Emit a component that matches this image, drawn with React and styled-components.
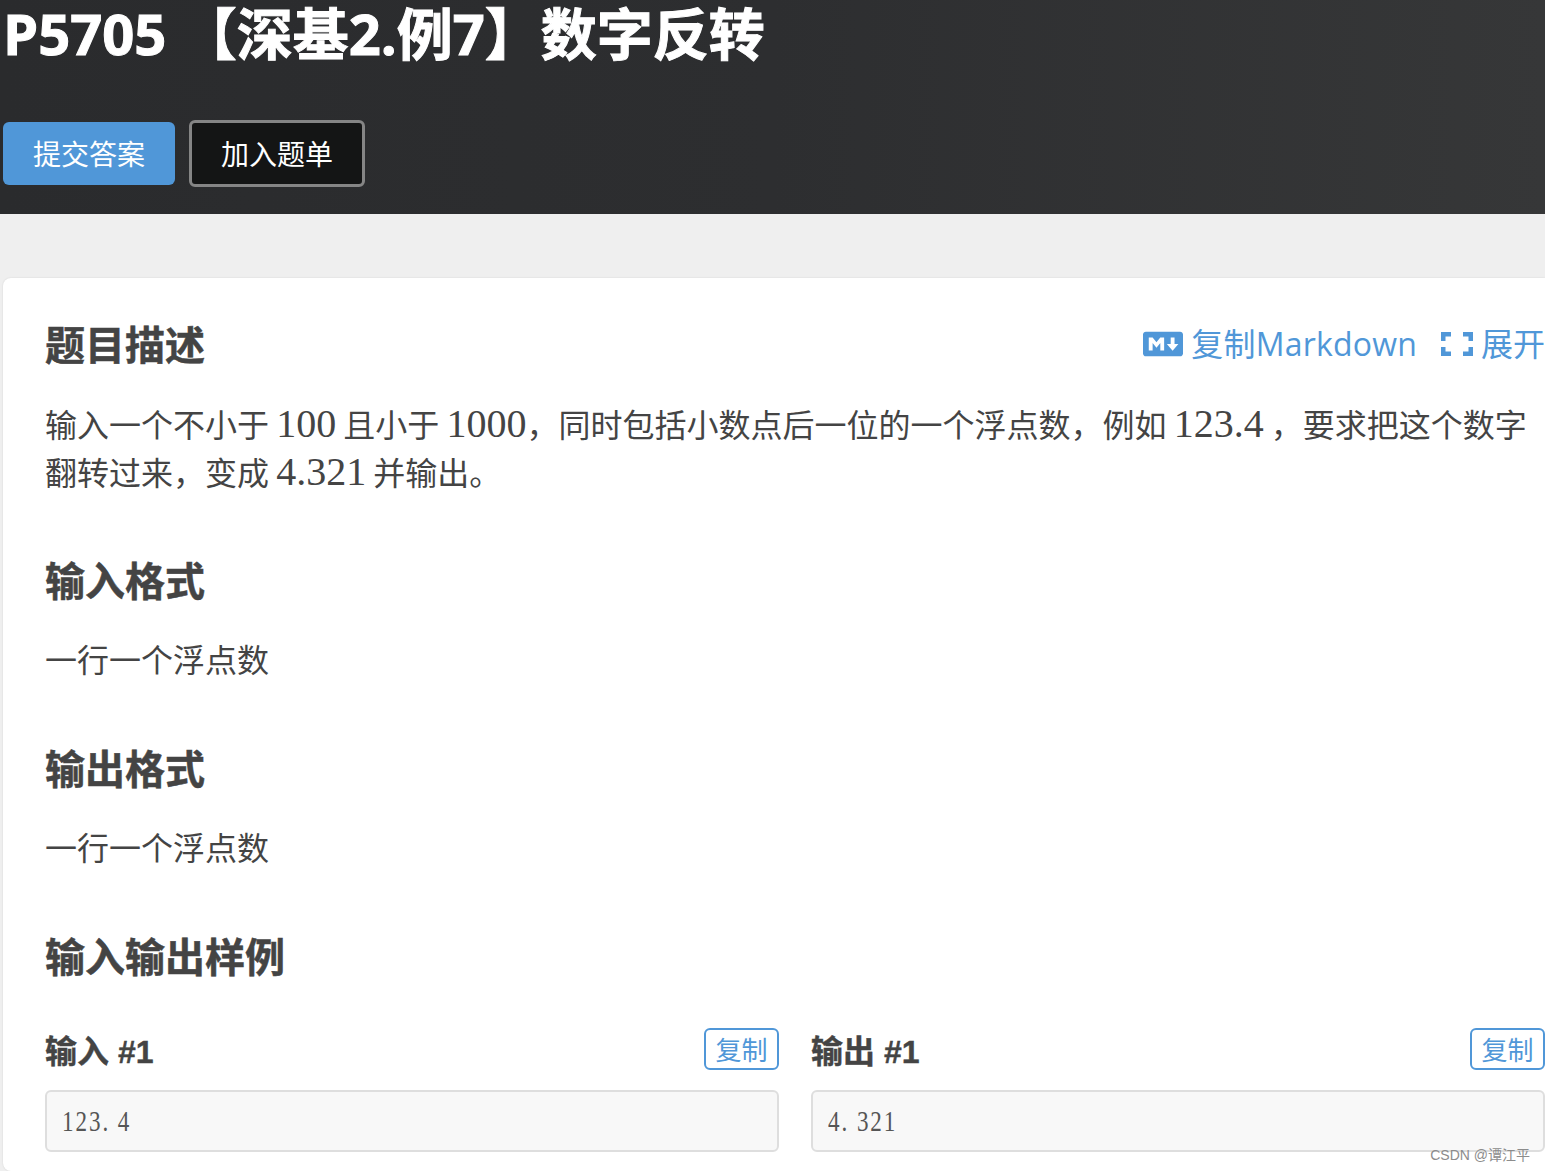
import React from "react";
import styled, { createGlobalStyle } from "styled-components";
import { FaMarkdown } from "react-icons/fa";

const GlobalStyle = createGlobalStyle`
  html, body {
    margin: 0;
    padding: 0;
    background: #efefef;
  }
  body {
    font-family: "Open Sans", "Noto Sans CJK SC", sans-serif;
    color: #444;
  }
`;

const Page = styled.div`
  position: relative;
  width: 1545px;
  height: 1171px;
  overflow: hidden;
  background: #efefef;
`;

const Header = styled.header`
  height: 214px;
  box-sizing: border-box;
  padding: 0 0 0 3px;
  background: linear-gradient(90deg, #2a2b2d 0%, #2d2e30 50%, #363738 100%);
`;

const Title = styled.h1`
  margin: 0 0 50px;
  height: 70px;
  font-size: 56px;
  line-height: 67px;
  font-weight: 700;
  color: #fff;
  white-space: nowrap;
  -webkit-text-stroke: 1px #fff;
`;

const Actions = styled.div`
  display: flex;
  align-items: center;
  gap: 14px;
`;

const SubmitButton = styled.button`
  width: 172px;
  height: 63px;
  padding: 0 0 2px;
  border: 0;
  border-radius: 6px;
  background: #5097d8;
  color: #fff;
  font: 400 28px "Noto Sans CJK SC", sans-serif;
`;

const ListButton = styled.button`
  width: 176px;
  height: 67px;
  padding: 0 0 2px;
  border: 3px solid #858585;
  border-radius: 6px;
  background: #141515;
  color: #fff;
  font: 400 28px "Noto Sans CJK SC", sans-serif;
`;

const Card = styled.main`
  margin: 64px 0 0 3px;
  padding: 41px 0 0 42px;
  height: 893px;
  box-sizing: border-box;
  background: #fff;
  border-radius: 8px 0 0 8px;
  box-shadow: 0 0 2px rgba(0, 0, 0, 0.12);
`;

const TitleRow = styled.div`
  display: flex;
  justify-content: space-between;
  align-items: center;
  height: 48px;
`;

const SectionTitle = styled.h2`
  margin: ${(p) => p.$top || 0}px 0 0;
  font: 700 40px/48px "Noto Sans CJK SC", sans-serif;
  color: #444;
  -webkit-text-stroke: 0.5px #444;
`;

const LinkRow = styled.div`
  display: flex;
  align-items: center;
  margin-top: 2px;
  color: #5097d8;
  font-size: 32px;
  line-height: 48px;
  white-space: nowrap;
`;

const LinkItem = styled.span`
  display: flex;
  align-items: center;
  gap: 8px;
  margin-left: ${(p) => p.$left || 0}px;
  letter-spacing: ${(p) => p.$spacing || 0}px;
`;

const Paragraph = styled.p`
  margin: ${(p) => p.$top || 0}px 0 0;
  font: 400 32px/48px "Noto Sans CJK SC", sans-serif;
  color: #444;
  white-space: nowrap;
`;

const MathText = styled.span`
  font-family: "Liberation Serif", serif;
  font-size: 40px;
  line-height: 1;
`;

const SampleGrid = styled.div`
  display: grid;
  grid-template-columns: 734px 734px;
  gap: 32px;
  margin-top: 49px;
`;

const SampleHead = styled.div`
  display: flex;
  justify-content: space-between;
  align-items: flex-start;
  height: 62px;
`;

const SampleLabel = styled.h3`
  margin: 2px 0 0;
  font: 700 32px/44px "Liberation Sans", "Noto Sans CJK SC", sans-serif;
  color: #444;
  -webkit-text-stroke: 0.4px #444;
`;

const CopyButton = styled.button`
  width: 75px;
  height: 42px;
  padding: 0;
  border: 2px solid #5097d8;
  border-radius: 6px;
  background: #fff;
  color: #5097d8;
  font: 400 26px/36px "Noto Sans CJK SC", sans-serif;
`;

const SampleBox = styled.pre`
  margin: 0;
  height: 62px;
  box-sizing: border-box;
  padding: 0 15px;
  border: 2px solid #dedede;
  border-radius: 6px;
  background: #f8f8f8;
  color: #555;
  font: 400 30px/58px "Liberation Serif", serif;
`;

const SampleValue = styled.span`
  display: inline-block;
  transform: scaleX(0.77);
  transform-origin: left center;
  letter-spacing: 2.5px;
`;

const Watermark = styled.div`
  position: absolute;
  right: 15px;
  bottom: 7px;
  font: 400 14px/18px "Liberation Sans", "Noto Sans CJK SC", sans-serif;
  color: #8c8c8c;
`;

const ExpandIcon = () => (
  <svg width="32" height="24" viewBox="0 0 32 24" fill="none" stroke="#5097d8" strokeWidth="4.5">
    <path d="M10 2.25H2.25V9M10 21.75H2.25V15M22 2.25H29.75V9M22 21.75H29.75V15" />
  </svg>
);

const samples = [
  { label: "输入 #1", value: "123. 4" },
  { label: "输出 #1", value: "4. 321" },
];

const App = () => {
  return (
    <Page>
      <GlobalStyle />
      <Header>
        <Title>P5705 【深基2.例7】数字反转</Title>
        <Actions>
          <SubmitButton>提交答案</SubmitButton>
          <ListButton>加入题单</ListButton>
        </Actions>
      </Header>
      <Card>
        <TitleRow>
          <SectionTitle>题目描述</SectionTitle>
          <LinkRow>
            <LinkItem $spacing={0.2}>
              <FaMarkdown size={40} />
              复制Markdown
            </LinkItem>
            <LinkItem $left={24}>
              <ExpandIcon />
              展开
            </LinkItem>
          </LinkRow>
        </TitleRow>
        <Paragraph $top={32}>
          输入一个不小于 <MathText>100</MathText> 且小于 <MathText>1000</MathText>，同时包括小数点后一位的一个浮点数，例如 <MathText>123.4</MathText> ，要求把这个数字
        </Paragraph>
        <Paragraph>
          翻转过来，变成 <MathText>4.321</MathText> 并输出。
        </Paragraph>
        <SectionTitle $top={60}>输入格式</SectionTitle>
        <Paragraph $top={31}>一行一个浮点数</Paragraph>
        <SectionTitle $top={61}>输出格式</SectionTitle>
        <Paragraph $top={31}>一行一个浮点数</Paragraph>
        <SectionTitle $top={61}>输入输出样例</SectionTitle>
        <SampleGrid>
          {samples.map((sample) => (
            <div key={sample.label}>
              <SampleHead>
                <SampleLabel>{sample.label}</SampleLabel>
                <CopyButton>复制</CopyButton>
              </SampleHead>
              <SampleBox>
                <SampleValue>{sample.value}</SampleValue>
              </SampleBox>
            </div>
          ))}
        </SampleGrid>
      </Card>
      <Watermark>CSDN @谭江平</Watermark>
    </Page>
  );
};

export default App;
